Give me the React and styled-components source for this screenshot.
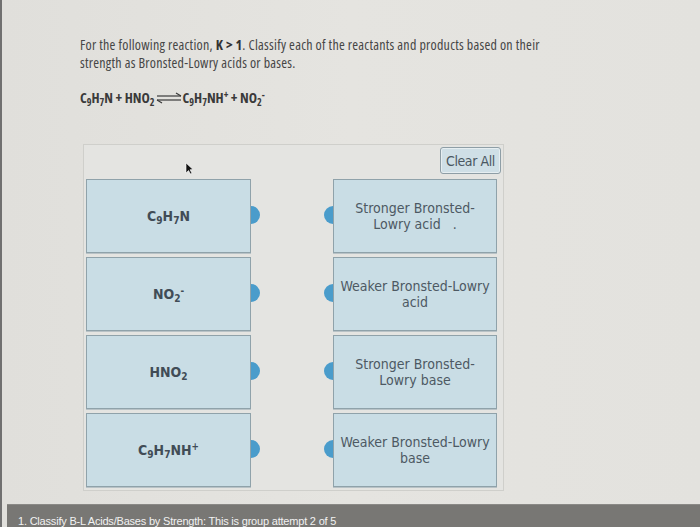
import React from "react";
import styled, { createGlobalStyle } from "styled-components";

const GlobalStyle = createGlobalStyle`
  html, body { margin: 0; padding: 0; }
  body { background: #e3e2de; }
`;

const Screen = styled.div`
  position: relative;
  width: 698px;
  height: 527px;
  border-left: 2px solid #707070;
  background: linear-gradient(90deg, #e0dfdb 0%, #e5e4e0 50%, #e3e2de 100%);
  display: flex;
  flex-direction: column;
  overflow: hidden;
`;

const Content = styled.div`
  padding: 36px 0 0 78px;
  display: flex;
  flex-direction: column;
`;

const Prompt = styled.p`
  margin: 0;
  font-family: "Open Sans", "Noto Sans", sans-serif;
  font-stretch: 80%;
  font-size: 14px;
  line-height: 18px;
  letter-spacing: 0.25px;
  color: #464646;
`;

const B = styled.b`
  font-weight: 700;
  color: #333;
`;

const Equation = styled.div`
  margin-top: 17px;
  display: flex;
  align-items: center;
  font-family: "Open Sans", "Noto Sans", sans-serif;
  font-stretch: 80%;
  font-weight: 700;
  font-size: 14px;
  line-height: 18px;
  color: #3a3a3a;
  white-space: pre;
`;

const Sub = styled.sub`
  font-size: 0.72em;
  vertical-align: -0.3em;
  line-height: 0;
`;

const Sup = styled.sup`
  font-size: 0.7em;
  vertical-align: 0.55em;
  line-height: 0;
`;

const Panel = styled.div`
  position: relative;
  margin: 37px 0 0 3px;
  width: 415px;
  border: 1px solid #cfcfcb;
  background: #e4e4e1;
  padding: 2px 2px 3px 2px;
  box-sizing: content-box;
`;

const PanelHeader = styled.div`
  display: flex;
  justify-content: flex-end;
  height: 32px;
`;

const ClearButton = styled.button`
  width: 61px;
  height: 27px;
  padding: 0;
  border: 1px solid #8e9ea6;
  border-radius: 3px;
  background: #cfdfe6;
  box-shadow: inset 0 0 0 1px #e6eef1;
  font-family: "DejaVu Sans", Verdana, sans-serif;
  font-stretch: condensed;
  font-size: 14px;
  color: #4a5761;
  letter-spacing: -0.4px;
`;

const Grid = styled.div`
  display: grid;
  grid-template-columns: 165px 164px;
  grid-auto-rows: 74px;
  column-gap: 82px;
  row-gap: 4px;
`;

const Card = styled.div`
  position: relative;
  box-sizing: border-box;
  border: 1px solid #8fa2aa;
  box-shadow: 0 1px 0 #b8c2c6;
  background: #c9dde5;
  display: flex;
  align-items: center;
  justify-content: center;
  text-align: center;
  font-family: "DejaVu Sans Condensed", "DejaVu Sans", Verdana, sans-serif;
  font-stretch: condensed;
  font-size: 14px;
  line-height: 16px;
  color: ${(p) => (p.$side === "left" ? "#414c56" : "#4d5963")};
  font-weight: ${(p) => (p.$side === "left" ? 700 : 400)};
  padding: 0 4px;

  &::after {
    content: "";
    position: absolute;
    top: 50%;
    width: 9px;
    height: 18px;
    margin-top: -10px;
    background: #4a9ccb;
    ${(p) =>
      p.$side === "left"
        ? "right: -10px; border-radius: 0 9px 9px 0;"
        : "left: -10px; border-radius: 9px 0 0 9px;"}
  }
`;

const Label = styled.span`
  display: block;
`;

const Dot = styled.span`
  margin-left: 12px;
`;

const Cursor = styled.svg`
  position: absolute;
  left: 101px;
  top: 17px;
`;

const Footer = styled.div`
  margin: auto 0 0 5px;
  height: 23px;
  background: #787774;
  border-top: 1px solid #8a8986;
  padding: 10px 0 0 11px;
  box-sizing: border-box;
  font-family: "Liberation Sans", Arial, sans-serif;
  font-size: 11px;
  letter-spacing: -0.2px;
  color: #f2f2f2;
  white-space: nowrap;
`;

const Arrows = () => (
  <svg width="26" height="12" viewBox="0 0 26 12" style={{ margin: "0 1px" }}>
    <line x1="1" y1="4" x2="25" y2="4" stroke="#3a3a3a" strokeWidth="1.2" />
    <line x1="25" y1="4" x2="20" y2="1" stroke="#3a3a3a" strokeWidth="1.2" />
    <line x1="1" y1="8" x2="25" y2="8" stroke="#3a3a3a" strokeWidth="1.2" />
    <line x1="1" y1="8" x2="6" y2="11" stroke="#3a3a3a" strokeWidth="1.2" />
  </svg>
);

const C9H7 = () => (
  <>
    C<Sub>9</Sub>H<Sub>7</Sub>
  </>
);

const leftItems = [
  <><C9H7 />N</>,
  <>NO<Sub>2</Sub><Sup>-</Sup></>,
  <>HNO<Sub>2</Sub></>,
  <><C9H7 />NH<Sup>+</Sup></>,
];

const rightItems = [
  <>Stronger Bronsted-<br />Lowry acid<Dot>.</Dot></>,
  <>Weaker Bronsted-Lowry<br />acid</>,
  <>Stronger Bronsted-<br />Lowry base</>,
  <>Weaker Bronsted-Lowry<br />base</>,
];

export default function App() {
  return (
    <>
      <GlobalStyle />
      <Screen>
        <Content>
          <Prompt>
            For the following reaction, <B>K &gt; 1</B>. Classify each of the reactants and products based on their
            <br />
            strength as Bronsted-Lowry acids or bases.
          </Prompt>
          <Equation>
            <span><C9H7 />N + HNO<Sub>2</Sub></span>
            <Arrows />
            <span><C9H7 />NH<Sup>+</Sup> + NO<Sub>2</Sub><Sup>-</Sup></span>
          </Equation>
          <Panel>
            <Cursor width="9" height="13" viewBox="0 0 9 13">
              <path d="M1 1 L1 11 L3.5 8.5 L5.5 12 L7 11.2 L5 7.8 L8 7.5 Z" fill="#111" stroke="#fff" strokeWidth="0.6" />
            </Cursor>
            <PanelHeader>
              <ClearButton>Clear All</ClearButton>
            </PanelHeader>
            <Grid>
              {leftItems.map((l, i) => (
                <React.Fragment key={i}>
                  <Card $side="left"><Label>{l}</Label></Card>
                  <Card $side="right"><Label>{rightItems[i]}</Label></Card>
                </React.Fragment>
              ))}
            </Grid>
          </Panel>
        </Content>
        <Footer>1. Classify B-L Acids/Bases by Strength: This is group attempt 2 of 5</Footer>
      </Screen>
    </>
  );
}
